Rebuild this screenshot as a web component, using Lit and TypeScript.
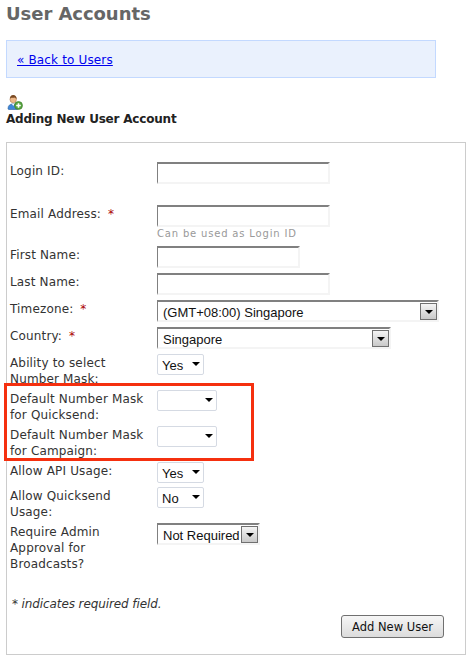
import { LitElement, html, css, nothing } from "lit";
import { customElement } from "lit/decorators.js";

type Row = {
  label: string[];
  req?: boolean;
  kind: "input" | "classic" | "flat";
  size: string;
  value?: string;
  hint?: string;
  cls?: string;
};

const rows: Row[] = [
  { label: ["Login ID:"], kind: "input", size: "w173", cls: "spaced" },
  { label: ["Email Address:"], req: true, kind: "input", size: "w173", hint: "Can be used as Login ID", cls: "hinted" },
  { label: ["First Name:"], kind: "input", size: "w143" },
  { label: ["Last Name:"], kind: "input", size: "w173" },
  { label: ["Timezone:"], req: true, kind: "classic", size: "w282", value: "(GMT+08:00) Singapore" },
  { label: ["Country:"], req: true, kind: "classic", size: "w234", value: "Singapore" },
  { label: ["Ability to select", "Number Mask:"], kind: "flat", size: "w47", value: "Yes" },
  { label: ["Default Number Mask", "for Quicksend:"], kind: "flat", size: "w60", value: "" },
  { label: ["Default Number Mask", "for Campaign:"], kind: "flat", size: "w60", value: "" },
  { label: ["Allow API Usage:"], kind: "flat", size: "w47", value: "Yes" },
  { label: ["Allow Quicksend", "Usage:"], kind: "flat", size: "w47", value: "No" },
  { label: ["Require Admin", "Approval for", "Broadcasts?"], kind: "classic", size: "w103", value: "Not Required" },
];

@customElement("app-root")
export class AppRoot extends LitElement {
  static styles = css`
    :host {
      display: block;
      position: relative;
      width: 474px;
      height: 667px;
      overflow: hidden;
      background: #fff;
      font-family: "DejaVu Sans", Verdana, sans-serif;
      font-size: 12px;
      color: #333;
    }
    .page { padding: 4px 8px 0 6px; display: flex; flex-direction: column; }
    h1 { margin: 0; font-size: 18px; line-height: 20px; font-weight: bold; color: #666; letter-spacing: -0.05px; }
    .back {
      margin-top: 16px;
      width: 430px;
      height: 38px;
      box-sizing: border-box;
      background: #eaf1fd;
      border: 1px solid #c3d9ff;
      padding: 1px 10px 0;
      display: flex;
      align-items: center;
      font-size: 12px;
      letter-spacing: 0.15px;
    }
    .back a { color: #0000ee; text-decoration: underline; }
    .icon { display: block; margin: 16px 0 0 1px; width: 16px; height: 16px; }
    h2 { margin: 1px 0 0; font-size: 12px; line-height: 16px; font-weight: bold; color: #222; letter-spacing: -0.2px; }
    .panel {
      margin-top: 15px;
      width: 460px;
      height: 513px;
      box-sizing: border-box;
      border: 1px solid #ccc;
      padding: 19px 0 0 3px;
      display: flex;
      flex-direction: column;
    }
    .row { display: flex; padding-bottom: 5px; }
    .row.flat { padding-bottom: 4px; }
    .row.spaced { padding-bottom: 21px; }
    .label { width: 147px; flex: none; line-height: 16px; color: #333; letter-spacing: 0.15px; margin: 1px 0 -1px; }
    .label div { white-space: nowrap; }
    .req { color: #a00; margin-left: 3px; }
    .field { display: flex; flex-direction: column; align-items: flex-start; }
    .hint { color: #999; font-size: 10px; line-height: 14px; letter-spacing: 0.82px; }
    .w173 { width: 173px; }
    .w143 { width: 143px; }
    .w282 { width: 282px; }
    .w234 { width: 234px; }
    .w47 { width: 47px; }
    .w60 { width: 60px; }
    .w103 { width: 103px; }
    input {
      display: block;
      height: 22px;
      box-sizing: border-box;
      margin: 0;
      padding: 0 2px;
      background: #fff;
      border-style: solid;
      border-width: 2px;
      border-color: #808080 #f4f4f4 #f4f4f4 #808080;
      border-left-width: 1px;
      outline: none;
    }
    .sel { position: relative; display: block; box-sizing: border-box; }
    select {
      display: block;
      width: 100%;
      margin: 0;
      appearance: none;
      -webkit-appearance: none;
      box-sizing: border-box;
      background: #fff;
      font-family: "Liberation Sans", Arial, sans-serif;
      font-size: 13px;
      color: #111;
      outline: none;
    }
    .classic select {
      height: 22px;
      border-style: solid;
      border-width: 2px;
      border-color: #808080 #f4f4f4 #f4f4f4 #808080;
      border-left-width: 1px;
      border-radius: 0;
      padding: 2px 14px 0 5px;
    }
    .flat select {
      height: 21px;
      border: 1px solid #d5dae3;
      border-radius: 2px;
      padding: 2px 16px 0 4px;
    }
    .btn {
      position: absolute;
      pointer-events: none;
      box-sizing: border-box;
      top: 3px;
      right: 2px;
      width: 17px;
      height: 17px;
      border: 1px solid #707070;
      background: linear-gradient(#f4f4f4, #c9c9c9);
      display: flex;
      align-items: center;
      justify-content: center;
    }
    .tri { width: 0; height: 0; border: 4px solid transparent; border-top: 4px solid #000; border-bottom: 0; }
    .flat .arrow {
      position: absolute;
      pointer-events: none;
      top: 8px;
      right: 4px;
      width: 0;
      height: 0;
      border: 4px solid transparent;
      border-top: 4px solid #000;
      border-bottom: 0;
    }
    .note { margin: 20px 0 0 2px; font-style: italic; line-height: 16px; color: #333; letter-spacing: -0.1px; }
    .actions { display: flex; justify-content: flex-end; margin: 3px 21px 0 0; }
    button {
      width: 103px;
      height: 23px;
      box-sizing: border-box;
      margin: 0;
      padding: 0;
      border: 1px solid #707070;
      border-radius: 3px;
      background: linear-gradient(#f6f6f6, #dcdcdc);
      font-family: "DejaVu Sans", Verdana, sans-serif;
      font-size: 11.5px;
      color: #111;
    }
    .mark {
      position: absolute;
      pointer-events: none;
      left: 4px;
      top: 383px;
      width: 250px;
      height: 78px;
      box-sizing: border-box;
      border: 3px solid #f5300f;
    }
  `;

  private field(r: Row) {
    if (r.kind === "input") {
      return html`<input class=${r.size} type="text" />`;
    }
    return html`<span class="sel ${r.kind} ${r.size}">
      <select>
        ${r.value ? html`<option>${r.value}</option>` : html`<option></option>`}
      </select>
      ${r.kind === "classic"
        ? html`<span class="btn"><span class="tri"></span></span>`
        : html`<span class="arrow"></span>`}
    </span>`;
  }

  render() {
    return html`
      <div class="page">
        <h1>User Accounts</h1>
        <div class="back"><a href="#">« Back to Users</a></div>
        <svg class="icon" viewBox="0 0 16 16" aria-hidden="true">
          <path d="M1 14.5c0-3 2-4.6 5-4.6s5 1.6 5 4.6c0 .6-.4 1-1 1H2c-.6 0-1-.4-1-1z" fill="#3f86d8" stroke="#2a5f9e" stroke-width=".6" />
          <path d="M5 10h2.4L6.2 12z" fill="#fff" />
          <circle cx="6.2" cy="5.6" r="3.2" fill="#eeb98a" stroke="#a9713f" stroke-width=".5" />
          <path d="M2.9 5.6C2.5 2.6 4 1 6.2 1s3.8 1.5 3.4 4.6c-.5-1.5-1.3-2.2-2.2-2.2-1 .4-3.4.3-3.7.3-.4.4-.7 1-.8 1.9z" fill="#7a4a22" />
          <circle cx="11.5" cy="11.5" r="4" fill="#57a43f" stroke="#3a7a2a" stroke-width=".6" />
          <path d="M11.5 9.2v4.6M9.2 11.5h4.6" stroke="#fff" stroke-width="1.6" />
        </svg>
        <h2>Adding New User Account</h2>
        <div class="panel">
          ${rows.map(
            (r) => html`<div class="row ${r.kind === "flat" ? "flat" : ""} ${r.cls ?? ""}">
              <div class="label">
                ${r.label.map(
                  (l, i) => html`<div>${l}${r.req && i === 0 ? html`<span class="req"> *</span>` : nothing}</div>`
                )}
              </div>
              <div class="field">
                ${this.field(r)}
                ${r.hint ? html`<span class="hint">${r.hint}</span>` : nothing}
              </div>
            </div>`
          )}
          <div class="note">* indicates required field.</div>
          <div class="actions"><button type="button">Add New User</button></div>
        </div>
      </div>
      <div class="mark"></div>
    `;
  }
}
